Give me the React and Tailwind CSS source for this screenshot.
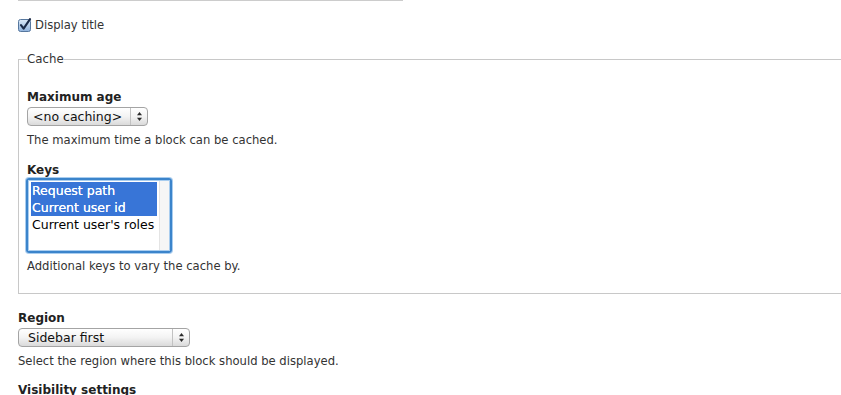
import React from "react";

function Arrows() {
    return (
        <svg width="7" height="11" viewBox="0 0 7 11">
            <path d="M3.5 1 L6 4.2 L1 4.2 Z" fill="#2a2a2a" />
            <path d="M1 6.8 L6 6.8 L3.5 10 Z" fill="#2a2a2a" />
        </svg>
    );
}

function PopUp({ value, className, textClass }) {
    return (
        <div className={"flex h-[19px] items-stretch rounded-[4px] border border-[#a4a4a4] bg-gradient-to-b from-white via-[#f3f3f3] to-[#dadada] " + className}>
            <span className={"flex-1 text-[12.5px] leading-[17px] text-[#111] " + textClass}>{value}</span>
            <span className="flex w-[17px] items-center justify-center border-l border-[#c2c2c2]">
                <Arrows />
            </span>
        </div>
    );
}

function Checkbox() {
    return (
        <svg width="14" height="14" viewBox="0 0 14 14">
            <defs>
                <linearGradient id="cb" x1="0" y1="0" x2="0" y2="1">
                    <stop offset="0" stopColor="#dce9f7" />
                    <stop offset="1" stopColor="#8fb2dc" />
                </linearGradient>
            </defs>
            <rect x="0.5" y="1.5" width="12" height="12" rx="2" fill="url(#cb)" stroke="#56779e" />
            <path d="M3 7.2 L5.6 10.6 L12 1.2" fill="none" stroke="#1a2946" strokeWidth="2.1" strokeLinecap="round" strokeLinejoin="round" />
        </svg>
    );
}

const keys = [
    { label: "Request path", selected: true },
    { label: "Current user id", selected: true },
    { label: "Current user's roles", selected: false },
];

export default function App() {
    return (
        <div className="min-h-screen bg-white font-['DejaVu_Sans',sans-serif] text-[11.6px] text-[#333]">
            <div className="ml-[18px] w-[385px] border-t border-[#cccccc]" />

            <label className="ml-[18px] mt-[15px] flex h-[18px] items-center gap-[2px] leading-[18px]">
                <Checkbox />
                <span className="ml-[1px]">Display title</span>
            </label>

            <fieldset className="ml-[18px] mt-[17px] border border-r-0 border-[#c8c8c8] pb-[19px] pl-[8px]">
                <legend className="p-0 text-[11.8px] leading-[16px] text-[#333]">Cache</legend>

                <div className="mt-[22px] text-[12px] font-bold leading-[16px] text-[#222]">Maximum age</div>
                <PopUp value="<no caching>" className="mt-[2px] w-[121px]" textClass="pl-[5px]" />
                <div className="mt-[6px] leading-[16px]">The maximum time a block can be cached.</div>

                <div className="mt-[14px] text-[12px] font-bold leading-[16px] text-[#222]">Keys</div>
                <div className="-ml-[1px] h-[75px] w-[146px] rounded-[3px] border-2 border-[#3b84cb] shadow-[0_0_0_1px_#a9cdef]">
                    <div className="flex h-full border border-[#a9cdef] bg-white">
                        <div className="flex-1 px-[2px] pt-[1px]">
                            {keys.map((k) => (
                                <div
                                    key={k.label}
                                    className={k.selected
                                        ? "bg-[#3875d7] pl-[1px] text-[12.5px] leading-[17px] text-white [text-shadow:0_0_0.4px_#fff]"
                                        : "pl-[1px] text-[12.5px] leading-[17px] text-black"}
                                >
                                    {k.label}
                                </div>
                            ))}
                        </div>
                        <div className="w-[10px] border-l border-[#e4e4e4] bg-[#f6f6f6]" />
                    </div>
                </div>
                <div className="mt-[5px] leading-[16px]">Additional keys to vary the cache by.</div>
            </fieldset>

            <div className="ml-[18px]">
                <div className="mt-[16px] text-[12px] font-bold leading-[16px] text-[#222]">Region</div>
                <PopUp value="Sidebar first" className="mt-[2px] w-[172px]" textClass="pl-[9px]" />
                <div className="mt-[6px] leading-[16px]">Select the region where this block should be displayed.</div>
                <div className="mt-[13px] text-[12px] font-bold leading-[16px] text-[#222]">Visibility settings</div>
            </div>
        </div>
    );
}
